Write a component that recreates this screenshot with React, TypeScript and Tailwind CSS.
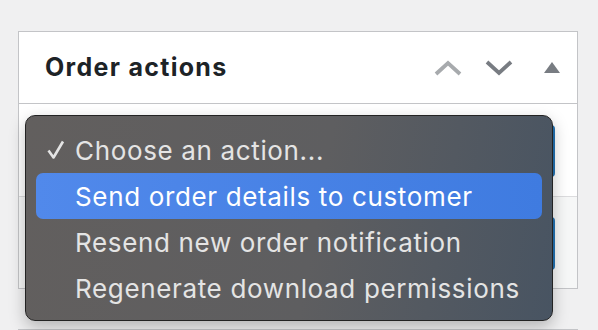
import { FC } from 'react';

const options = [
  'Choose an action...',
  'Send order details to customer',
  'Resend new order notification',
  'Regenerate download permissions',
];

const Chevron: FC<{ dir: 'up' | 'down'; color: string }> = ({ dir, color }) => (
  <svg width="28" height="16" viewBox="0 0 28 16" fill="none">
    <polyline
      points={dir === 'up' ? '2,14 14,3 26,14' : '2,2 14,13 26,2'}
      stroke={color}
      strokeWidth="3.8"
      strokeLinecap="butt"
    />
  </svg>
);

const ActionMenu: FC = () => (
  <div className="absolute left-[6px] top-[83px] w-[528px] h-[206px] rounded-[10px] border border-[#232323] bg-[linear-gradient(100deg,#625f5e_0%,#5e5e60_55%,#485462_100%)] shadow-[0_6px_16px_rgba(0,0,0,0.25)] pt-[11px] px-[10px] font-['Inter','Liberation_Sans',sans-serif] text-[26px] tracking-[0.65px]">
    {options.map((opt, i) => (
      <div
        key={opt}
        className={`relative flex items-center h-[46px] pl-[39px] rounded-[7px] ${
          i === 1
            ? 'bg-[linear-gradient(90deg,#5189eb,#3f7be0)] text-white'
            : 'text-[#e4e4e4]'
        }`}
      >
        {i === 0 && (
          <svg width="18" height="20" viewBox="0 0 18 20" fill="none" className="absolute left-[11px] top-[13px]">
            <path d="M1.5 10.5 L6.5 17.5 L16 1.5" stroke="#e4e4e4" strokeWidth="2.6" strokeLinejoin="round" />
          </svg>
        )}
        {opt}
      </div>
    ))}
  </div>
);

export default function App() {
  return (
    <div className="w-[598px] h-[330px] overflow-hidden bg-[#f0f0f1] pt-[31px]">
      <div className="relative ml-[18px] w-[560px] border border-[#c3c4c7] bg-white">
        <div className="flex items-center h-[72px] border-b border-[#c3c4c7] pl-[26px] pr-[17px]">
          <h2 className="flex-1 font-['Inter','Liberation_Sans',sans-serif] font-bold text-[25px] text-[#1d2327] tracking-[1.3px]">
            Order actions
          </h2>
          <div className="flex items-center gap-[23px]">
            <Chevron dir="up" color="#a7aaad" />
            <Chevron dir="down" color="#787c82" />
            <svg width="16" height="12" viewBox="0 0 16 12" className="ml-[8px]">
              <polygon points="8,0 16,11 0,11" fill="#787c82" />
            </svg>
          </div>
        </div>
        <div className="h-[92px] pt-[21px] pl-[8px] pr-[22px]">
          <div className="h-[52px] rounded-[4px] border-2 border-[#2271b1] bg-white" />
        </div>
        <div className="flex justify-end h-[92px] border-t border-[#dcdcde] bg-[#f6f7f7] pt-[20px] pr-[22px]">
          <div className="w-[120px] h-[53px] rounded-[4px] bg-[#2271b1]" />
        </div>
        <ActionMenu />
      </div>
      <div className="mt-[40px] ml-[18px] w-[560px] h-[20px] border border-[#c3c4c7] bg-white" />
    </div>
  );
}
